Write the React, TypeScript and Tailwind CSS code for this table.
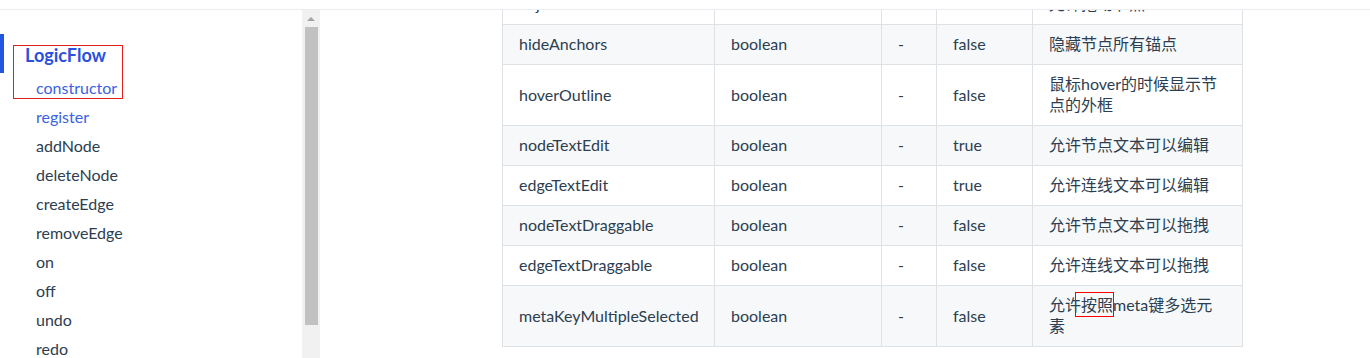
import React from 'react';

const navItems = [
  { label: 'constructor', active: true },
  { label: 'register', active: true },
  { label: 'addNode' },
  { label: 'deleteNode' },
  { label: 'createEdge' },
  { label: 'removeEdge' },
  { label: 'on' },
  { label: 'off' },
  { label: 'undo' },
  { label: 'redo' },
];

type Row = {
  name: string;
  type: string;
  required: string;
  def: string;
  desc: React.ReactNode;
};

const rows: Row[] = [
  { name: 'adjustNodePosition', type: 'boolean', required: '-', def: 'true', desc: '允许拖动节点' },
  { name: 'hideAnchors', type: 'boolean', required: '-', def: 'false', desc: '隐藏节点所有锚点' },
  {
    name: 'hoverOutline',
    type: 'boolean',
    required: '-',
    def: 'false',
    desc: (
      <>
        鼠标hover的时候显示节
        <br />
        点的外框
      </>
    ),
  },
  { name: 'nodeTextEdit', type: 'boolean', required: '-', def: 'true', desc: '允许节点文本可以编辑' },
  { name: 'edgeTextEdit', type: 'boolean', required: '-', def: 'true', desc: '允许连线文本可以编辑' },
  { name: 'nodeTextDraggable', type: 'boolean', required: '-', def: 'false', desc: '允许节点文本可以拖拽' },
  { name: 'edgeTextDraggable', type: 'boolean', required: '-', def: 'false', desc: '允许连线文本可以拖拽' },
  {
    name: 'metaKeyMultipleSelected',
    type: 'boolean',
    required: '-',
    def: 'false',
    desc: (
      <>
        允许
        <span className="relative">
          按照
          <span className="absolute -left-[6px] -right-[1px] -top-[3px] -bottom-[3px] border border-[#ff0000]" />
        </span>
        meta键多选元
        <br />
        素
      </>
    ),
  },
];

const cell = 'border border-[#dfe2e5] px-4 pt-[8px] pb-[10px] text-left align-middle font-normal whitespace-nowrap';

export default function App() {
  return (
    <div
      className="w-[1370px] h-[358px] overflow-hidden bg-white text-[#2c3e50]"
      style={{ fontFamily: 'Lato, "Noto Sans CJK SC", sans-serif' }}
    >
      {/* top navbar edge */}
      <div className="h-[10px] border-b border-[#eaecef] bg-white relative z-10" />

      <div className="flex h-[348px]">
        {/* Sidebar */}
        <div className="relative w-[302px] shrink-0">
          <div className="pt-[24px]">
            <div className="h-[39px] border-l-4 border-[#2355e0] pl-[21px] pt-[3px] flex items-center text-[18px] font-bold text-[#2a50dc]">
              LogicFlow
            </div>
            {navItems.map((item) => (
              <div
                key={item.label}
                className={`h-[29px] pl-[36px] flex items-center text-[16px] ${item.active ? 'text-[#3a62e2]' : 'text-[#2c3e50]'}`}
              >
                {item.label}
              </div>
            ))}
          </div>
          <div className="absolute left-[13px] top-[35px] w-[110px] h-[54px] border border-[#e0201b]" />
        </div>

        {/* Sidebar scrollbar */}
        <div className="w-[18px] shrink-0 bg-[#f1f1f1] flex flex-col items-center">
          <div className="h-[17px] flex items-center justify-center">
            <div className="w-0 h-0 border-l-[4px] border-r-[4px] border-b-[4px] border-l-transparent border-r-transparent border-b-[#a3a3a3]" />
          </div>
          <div className="w-[13px] h-[298px] bg-[#c1c1c1]" />
        </div>

        {/* Main content */}
        <div className="flex-1 overflow-hidden pl-[182px]">
          <table className="-mt-[26px] w-[740px] table-fixed border-collapse text-[16px] leading-[21px]">
            <colgroup>
              <col className="w-[212px]" />
              <col className="w-[167px]" />
              <col className="w-[55px]" />
              <col className="w-[96px]" />
              <col className="w-[210px]" />
            </colgroup>
            <tbody>
              {rows.map((r, i) => (
                <tr key={r.name} className={i % 2 === 1 ? 'bg-[#f6f8fa]' : 'bg-white'}>
                  <td className={cell}>{r.name}</td>
                  <td className={cell}>{r.type}</td>
                  <td className={cell}>{r.required}</td>
                  <td className={cell}>{r.def}</td>
                  <td className={cell}>{r.desc}</td>
                </tr>
              ))}
            </tbody>
          </table>
        </div>
      </div>
    </div>
  );
}
